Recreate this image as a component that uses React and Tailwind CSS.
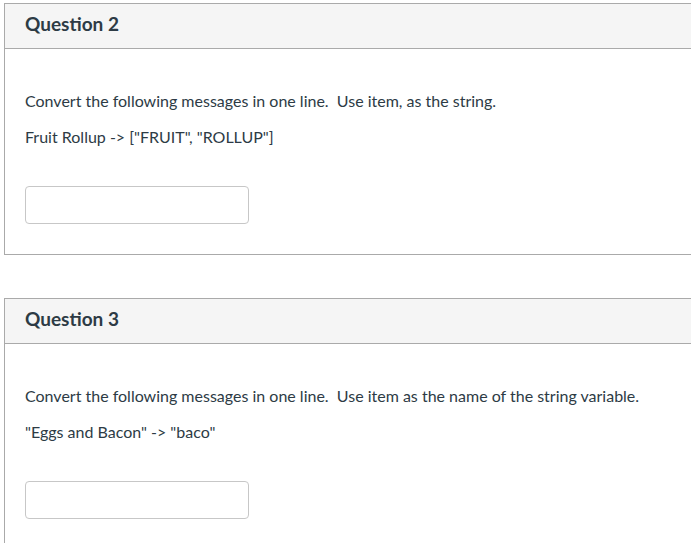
const questions = [
  {
    title: 'Question 2',
    prompt: 'Convert the following messages in one line.  Use item, as the string.',
    example: 'Fruit Rollup -> ["FRUIT", "ROLLUP"]',
  },
  {
    title: 'Question 3',
    prompt: 'Convert the following messages in one line.  Use item as the name of the string variable.',
    example: '"Eggs and Bacon" -> "baco"',
  },
];

function QuestionCard({ title, prompt, example }) {
  return (
    <div className="ml-[4px] w-[720px] border border-[#aaaaaa] bg-white">
      <div className="h-[45px] border-b border-[#aaaaaa] bg-[#f5f5f5] pl-[20px] pb-[5px] flex items-center">
        <h2 className="text-[19px] font-bold text-[#2d3b45] leading-none">{title}</h2>
      </div>
      <div className="pl-[20px] pt-[40px] pb-[30px] text-[16px] leading-[24px] text-[#2d3b45]">
        <p className="whitespace-pre">{prompt}</p>
        <p className="mt-[12px] whitespace-pre">{example}</p>
        <input
          type="text"
          className="mt-[37px] block h-[38px] w-[224px] rounded-[4px] border border-[#c7c7c7] bg-white"
        />
      </div>
    </div>
  );
}

export default function App() {
  return (
    <div
      className="h-[543px] w-[691px] overflow-hidden bg-white pt-[3px]"
      style={{ fontFamily: 'Lato, "Liberation Sans", sans-serif' }}
    >
      <div className="flex flex-col gap-[43px]">
        {questions.map((q) => (
          <QuestionCard key={q.title} {...q} />
        ))}
      </div>
    </div>
  );
}
